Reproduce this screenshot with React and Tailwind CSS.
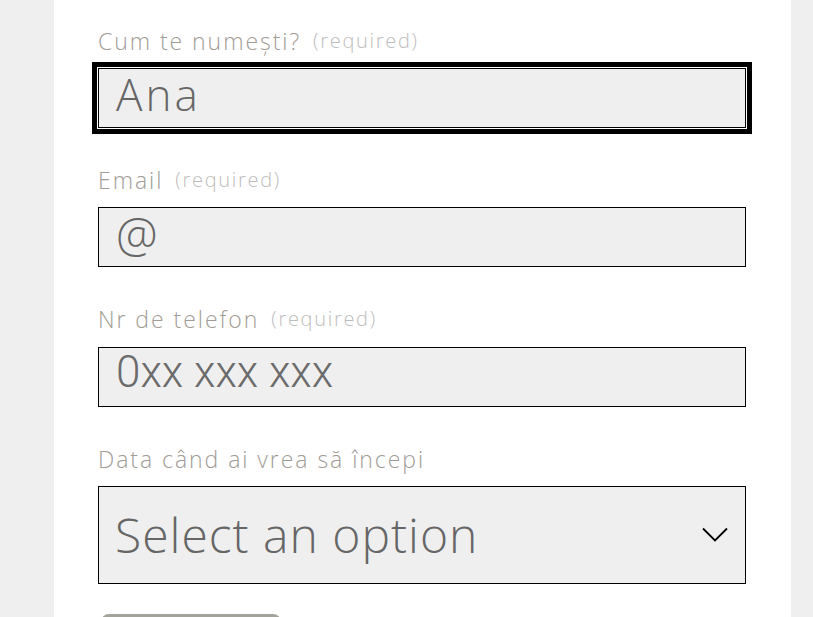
import React from "react";

const labelFont = { fontFamily: "'Open Sans', 'Noto Sans', sans-serif" };

function Label({ text, required }) {
  return (
    <div className="h-[30px] flex items-center whitespace-nowrap" style={labelFont}>
      <span className="text-[23px] font-light text-[#9f9c96] tracking-[1.95px]">{text}</span>
      {required && <span className="ml-[12px] text-[20px] font-light text-[#bdbdbd] tracking-[1.7px]">(required)</span>}
    </div>
  );
}

export default function App() {
  return (
    <div className="w-[813px] h-[617px] overflow-hidden bg-[#efefef] flex">
      <div className="w-[54px] shrink-0" />
      <div className="w-[737px] shrink-0 bg-white pl-[44px] pt-[26px]" style={labelFont}>
        <Label text="Cum te numești?" required />
        <div className="mt-[12px] w-[648px] h-[60px] border border-black bg-[#efefef] shadow-[0_0_0_1px_#fff,0_0_0_6px_#000] flex items-center pl-[17px] pb-[8px]">
          <span className="text-[44px] font-light text-[#666] leading-none tracking-[3px]">Ana</span>
        </div>

        <div className="mt-[37px]"><Label text="Email" required /></div>
        <div className="mt-[12px] w-[648px] h-[60px] border border-black bg-[#efefef] flex items-center pl-[17px] pb-[6px]">
          <span className="text-[47px] font-light text-[#666] leading-none">@</span>
        </div>

        <div className="mt-[37px]"><Label text="Nr de telefon" required /></div>
        <div className="mt-[13px] w-[648px] h-[60px] border border-black bg-[#efefef] flex items-center pl-[17px] pb-[10px]">
          <span className="text-[44px] font-light text-[#6b6b6b] leading-none" style={{ fontFamily: "Roboto, sans-serif" }}>0xx xxx xxx</span>
        </div>

        <div className="mt-[37px]"><Label text="Data când ai vrea să începi" /></div>
        <div className="mt-[12px] w-[648px] h-[98px] border border-black bg-[#efefef] flex items-center justify-between pl-[16px] pr-[17px]">
          <span className="text-[48px] font-light text-[#666] leading-none tracking-[1px]">Select an option</span>
          <svg width="26" height="16" viewBox="0 0 26 16" fill="none">
            <path d="M1 1.5 L13 13.5 L25 1.5" stroke="#000" strokeWidth="1.8" />
          </svg>
        </div>

        <div className="mt-[30px] ml-[3px] w-[180px] h-[20px] rounded-[8px] bg-[#a3a39c]" />
      </div>
      <div className="flex-1" />
    </div>
  );
}
